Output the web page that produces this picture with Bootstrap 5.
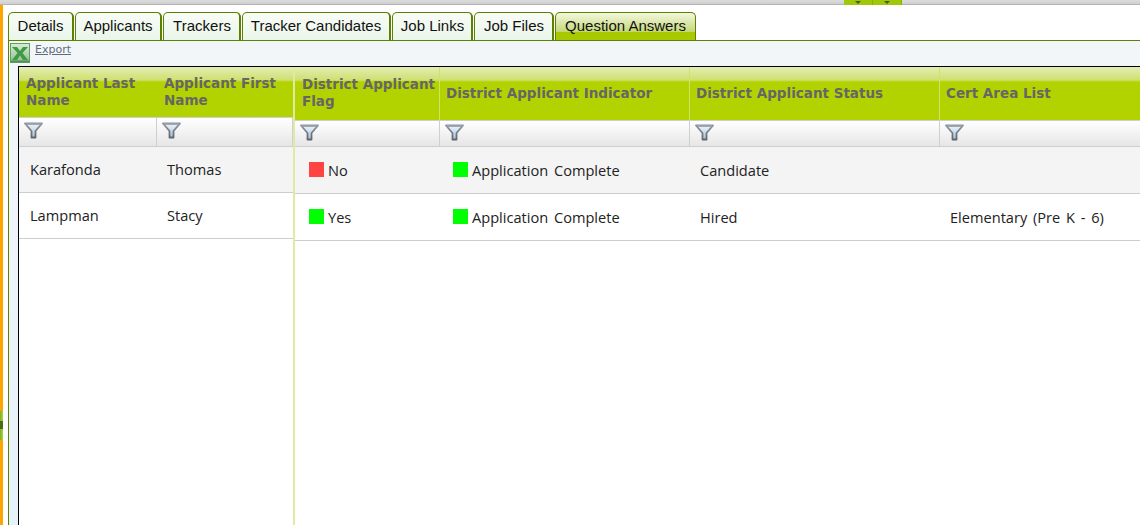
<!DOCTYPE html>
<html lang="en">
<head>
<meta charset="UTF-8">
<title>Job Applicants</title>
<link rel="stylesheet" href="https://cdn.jsdelivr.net/npm/bootstrap@5.3.0/dist/css/bootstrap.min.css">
<style>
html, body { height: 525px; overflow: hidden; background: #fff; }
body { font-family: "Liberation Sans", Arial, sans-serif; }
.top-strip { height: 5px; background: linear-gradient(#dcdcdc, #cfcfcf); border-bottom: 1px solid #b4b4b4; padding-left: 844px; }
.top-grip { width: 29px; height: 5px; background: #a0c80a; border-right: 1px solid #8fae00; }
.top-grip::after { content: ""; display: block; margin: 1px auto 0; width: 0; height: 0; border: 3px solid transparent; border-top-color: #4f5b10; border-bottom: 0; }
.page-wrap { height: 520px; }
.side-strip { width: 3px; background: #ffa500; padding-top: 406px; }
.side-grip { height: 29px; padding-top: 10px; background: linear-gradient(90deg, #7cb518, #a8d24a); }
.side-grip::after { content: ""; display: block; width: 3px; height: 8px; background: #4d6b12; }
.main-col { margin-left: 5px; min-width: 0; }
.tab-row { margin-top: 7px; height: 28px; padding: 0; flex-wrap: nowrap; border-bottom: 0; }
.tab-row .nav-link { height: 28px; padding: 4px 0 0; margin: 0 1px 0 0; text-align: center; font-size: 15px; line-height: 18px; color: #111;
  background: linear-gradient(#f8fcf6, #eaf6ea); border: 1px solid #5c8000; border-bottom: 0; border-right-width: 2px; border-radius: 5px 5px 0 0; }
.tab-row .nav-link.active { color: #111; border-color: #5c8000; background: linear-gradient(#f3f7dc 0, #c6d97c 68%, #a8c800 72%, #a8c800 100%); border-right-width: 1px; }
.tab-details { width: 66px; } .tab-applicants { width: 87px; } .tab-candidates { width: 149px; } .tab-answers { width: 141px; }
.tab-row .tab-trackers { width: 78px; padding-left: 1px; }
.tab-row .tab-links { width: 81px; padding-left: 1px; }
.tab-row .tab-files { width: 80px; padding-left: 1px; }
.tab-body { border-top: 1px solid #5c8000; border-left: 1px solid #5c8000; background: linear-gradient(#f3f6f9, #e6f1fb); padding-left: 9px; min-height: 0; }
.export-row { height: 25px; margin-left: -8px; }
.export-link { font-family: "DejaVu Sans", sans-serif; font-size: 11px; line-height: 13px; color: #5d6d7e; margin-left: 5px; margin-top: 2px; }
.excel-icon { margin-top: 2px; }
.grid-box { border-top: 1px solid #000; border-left: 1px solid #000; background: #fff; min-height: 0; }
.frozen-pane { width: 274px; flex: none; }
.split-bar { width: 2px; flex: none; background: #e2e9a4; }
.scroll-pane { min-width: 0; overflow: hidden; }
.data-grid { table-layout: fixed; margin: 0; border-collapse: separate; border-spacing: 0; }
.data-grid > :not(caption) > * > * { padding: 0; border: 0; box-shadow: none; background: transparent; vertical-align: middle; }
.data-grid th.head-cell { height: 50px; padding: 0 0 1px 7px; font-family: "DejaVu Sans", Verdana, sans-serif; font-size: 13.5px; line-height: 17px; font-weight: 700; color: #666;
  background: linear-gradient(#e3edb4 0, #cfe070 13px, #b3d300 15px, #b3d300 100%); }
.scroll-pane .data-grid th.head-cell { height: 53px; padding: 0 0 0 6px; border-right: 1px solid #cfe26a; }
.scroll-pane .data-grid th.head-cell:first-child { padding: 0 0 2px 7px; }
.data-grid td.filter-cell { height: 30px; padding: 0 0 0 5px; background: linear-gradient(#fff, #e6e6e6); border-top: 1px solid #cfcfcf; border-bottom: 1px solid #cfcfcf; border-right: 1px solid #cfcfcf; }
.scroll-pane .data-grid td.filter-cell { height: 27px; }
.filter-icon { display: block; margin-bottom: 4px; }
.scroll-pane .filter-icon { margin-bottom: 2px; }
.data-grid td.data-cell { height: 46px; padding: 0 10px 0 11px; font-family: "Open Sans", sans-serif; font-size: 14.6px; word-spacing: 2px; color: #222; border-bottom: 1px solid #cdcdcd; white-space: nowrap; overflow: hidden; }
.data-grid td.data-cell + td.data-cell { padding-left: 10px; }
.scroll-pane .data-grid td.data-cell { height: 47px; padding: 2px 0 0 10px; }
.scroll-pane .data-grid td.flag-cell { padding-left: 14px; }
.scroll-pane .data-grid td.flag-cell + td.flag-cell { padding-left: 13px; }
.data-grid tr.shade-row td.data-cell { background: #f4f4f4; }
.flag-box { display: inline-block; width: 15px; height: 15px; margin-right: 4px; vertical-align: -1px; }
.flag-red { background: #ff4444; } .flag-green { background: #00ff00; }
.scroll-pane .data-grid td.status-pad { padding-left: 32px; }
</style>
</head>
<body>
<svg width="0" height="0" class="d-block">
  <defs>
    <linearGradient id="funnelFill" x1="0" y1="0" x2="0" y2="1"><stop offset="0" stop-color="#eef4fb"/><stop offset="1" stop-color="#a9c2dc"/></linearGradient>
    <linearGradient id="funnelRim" x1="0" y1="0" x2="0" y2="1"><stop offset="0" stop-color="#8d959d"/><stop offset="1" stop-color="#5f666e"/></linearGradient>
    <linearGradient id="excelFill" x1="0" y1="0" x2="0" y2="1"><stop offset="0" stop-color="#dcebd8"/><stop offset="1" stop-color="#8fbe8c"/></linearGradient>
    <symbol id="funnel" viewBox="0 0 19 17">
      <path d="M1 1.5 H18 L11.5 9 V15.5 H7.5 V9 Z" fill="url(#funnelFill)" stroke="url(#funnelRim)" stroke-width="1.8" stroke-linejoin="round"/>
      <path d="M2 2 H17" stroke="#9aa3ad" stroke-width="1.6"/>
    </symbol>
  </defs>
</svg>
<div class="top-strip d-flex"><div class="top-grip"></div><div class="top-grip"></div></div>
<div class="page-wrap d-flex">
  <div class="side-strip flex-shrink-0"><div class="side-grip"></div></div>
  <div class="main-col flex-grow-1 d-flex flex-column">
    <ul class="nav nav-tabs tab-row">
      <li class="nav-item"><a class="nav-link tab-details" href="#">Details</a></li>
      <li class="nav-item"><a class="nav-link tab-applicants" href="#">Applicants</a></li>
      <li class="nav-item"><a class="nav-link tab-trackers" href="#">Trackers</a></li>
      <li class="nav-item"><a class="nav-link tab-candidates" href="#">Tracker Candidates</a></li>
      <li class="nav-item"><a class="nav-link tab-links" href="#">Job Links</a></li>
      <li class="nav-item"><a class="nav-link tab-files" href="#">Job Files</a></li>
      <li class="nav-item"><a class="nav-link tab-answers active" href="#">Question Answers</a></li>
    </ul>
    <div class="tab-body flex-grow-1 d-flex flex-column">
      <div class="export-row d-flex align-items-start">
        <svg class="excel-icon flex-shrink-0" width="20" height="20" viewBox="0 0 20 20">
          <rect x="0.5" y="0.5" width="19" height="19" fill="url(#excelFill)" stroke="#5f9e62"/>
          <path d="M2 4 H7 L10 8 L13 4 H18 L12.5 10 L18 17 H13 L10 12.5 L7 17 H2 L7.5 10 Z" fill="#3f9a46"/>
          <path d="M1 17.5 H19 V19 H1 Z" fill="#4f8f52"/>
        </svg>
        <a class="export-link" href="#">Export</a>
      </div>
      <div class="grid-box flex-grow-1 d-flex">
        <div class="frozen-pane">
          <table class="table data-grid">
            <colgroup><col style="width:138px"><col style="width:136px"></colgroup>
            <thead>
              <tr><th class="head-cell">Applicant Last Name</th><th class="head-cell">Applicant First Name</th></tr>
            </thead>
            <tbody>
              <tr>
                <td class="filter-cell"><svg class="filter-icon" width="19" height="17"><use href="#funnel"/></svg></td>
                <td class="filter-cell"><svg class="filter-icon" width="19" height="17"><use href="#funnel"/></svg></td>
              </tr>
              <tr class="shade-row"><td class="data-cell">Karafonda</td><td class="data-cell">Thomas</td></tr>
              <tr><td class="data-cell">Lampman</td><td class="data-cell">Stacy</td></tr>
            </tbody>
          </table>
        </div>
        <div class="split-bar"></div>
        <div class="scroll-pane flex-grow-1">
          <table class="table data-grid" style="width:895px">
            <colgroup><col style="width:145px"><col style="width:250px"><col style="width:250px"><col style="width:250px"></colgroup>
            <thead>
              <tr>
                <th class="head-cell">District Applicant Flag</th>
                <th class="head-cell">District Applicant Indicator</th>
                <th class="head-cell">District Applicant Status</th>
                <th class="head-cell">Cert Area List</th>
              </tr>
            </thead>
            <tbody>
              <tr>
                <td class="filter-cell"><svg class="filter-icon" width="19" height="17"><use href="#funnel"/></svg></td>
                <td class="filter-cell"><svg class="filter-icon" width="19" height="17"><use href="#funnel"/></svg></td>
                <td class="filter-cell"><svg class="filter-icon" width="19" height="17"><use href="#funnel"/></svg></td>
                <td class="filter-cell"><svg class="filter-icon" width="19" height="17"><use href="#funnel"/></svg></td>
              </tr>
              <tr class="shade-row">
                <td class="data-cell flag-cell"><span class="flag-box flag-red"></span>No</td>
                <td class="data-cell flag-cell"><span class="flag-box flag-green"></span>Application Complete</td>
                <td class="data-cell status-pad">Candidate</td>
                <td class="data-cell"></td>
              </tr>
              <tr>
                <td class="data-cell flag-cell"><span class="flag-box flag-green"></span>Yes</td>
                <td class="data-cell flag-cell"><span class="flag-box flag-green"></span>Application Complete</td>
                <td class="data-cell status-pad">Hired</td>
                <td class="data-cell">Elementary (Pre K - 6)</td>
              </tr>
            </tbody>
          </table>
        </div>
      </div>
    </div>
  </div>
</div>
<script src="https://cdn.jsdelivr.net/npm/bootstrap@5.3.0/dist/js/bootstrap.bundle.min.js"></script>
</body>
</html>
